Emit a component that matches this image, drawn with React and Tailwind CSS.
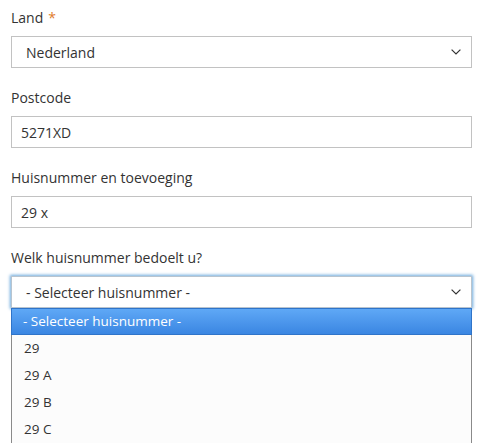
import React from "react";

const Chevron = () => (
  <svg width="10" height="6" viewBox="0 0 10 6" className="shrink-0">
    <path d="M0.6 0.6 L5 5 L9.4 0.6" fill="none" stroke="#333" strokeWidth="1.2" />
  </svg>
);

function Label({ children, required }) {
  return (
    <div className="h-5 leading-5 text-[14px] text-[#333] mb-2">
      {children}
      {required && <span className="text-[#e07b2b] ml-[5px]">*</span>}
    </div>
  );
}

function Input({ value }) {
  return (
    <div className="h-8 border border-[#c2c2c2] bg-white flex items-center pl-[9px] text-[14px] text-[#333]">
      {value}
    </div>
  );
}

function Select({ value, focused }) {
  return (
    <div
      className={
        "h-8 border bg-white flex items-center justify-between pl-[14px] pr-[10px] text-[14px] text-[#333] " +
        (focused
          ? "border-[#b8c4cf] shadow-[0_0_3px_1px_#6aa8dc]"
          : "border-[#c2c2c2]")
      }
    >
      <span>{value}</span>
      <Chevron />
    </div>
  );
}

export default function App() {
  const options = ["29", "29 A", "29 B", "29 C"];
  return (
    <div
      className="w-[486px] h-[443px] overflow-hidden bg-white pl-[11px] pr-[14px] pt-2"
      style={{ fontFamily: '"Open Sans", "Noto Sans", sans-serif' }}
    >
      <div className="mb-5">
        <Label required>Land</Label>
        <Select value="Nederland" />
      </div>
      <div className="mb-5">
        <Label>Postcode</Label>
        <Input value="5271XD" />
      </div>
      <div className="mb-5">
        <Label>Huisnummer en toevoeging</Label>
        <Input value="29 x" />
      </div>
      <div>
        <Label>Welk huisnummer bedoelt u?</Label>
        <div className="relative">
          <Select value="- Selecteer huisnummer -" focused />
          <div className="absolute left-0 right-0 top-full border-x border-[#8a8a8a] bg-[#fcfcfc] text-[13.5px] text-[#333]">
            <div className="h-[27px] flex items-center pl-[11px] text-white border border-[#2f74c9] -mx-px bg-gradient-to-b from-[#5fa8f6] to-[#3a86e2]">
              - Selecteer huisnummer -
            </div>
            {options.map((o) => (
              <div key={o} className="h-[27px] flex items-center pl-[12px]">
                {o}
              </div>
            ))}
          </div>
        </div>
      </div>
    </div>
  );
}
